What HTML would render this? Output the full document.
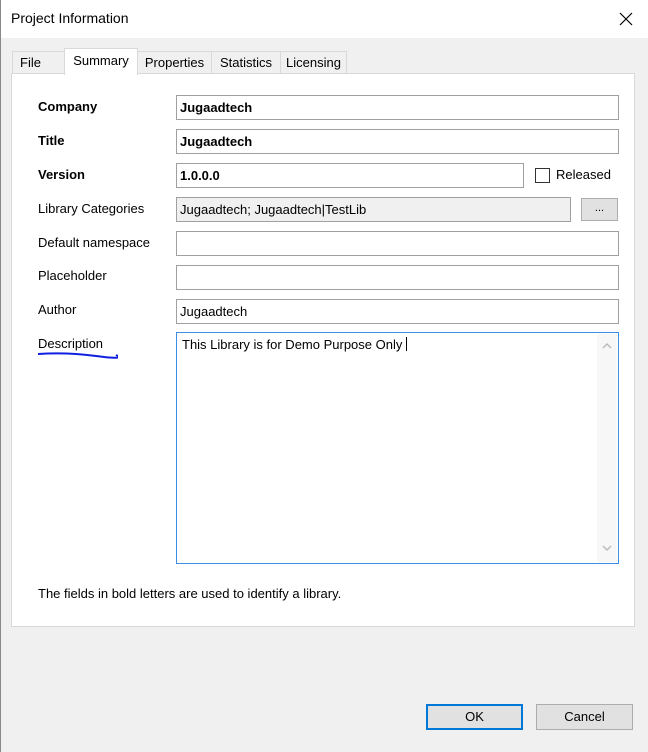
<!DOCTYPE html>
<html><head><style>
body{margin:0;width:648px;height:752px;background:#f0f0f0;font-family:"Liberation Sans",sans-serif;font-size:13px;color:#000;position:relative;overflow:hidden}
.a{position:absolute}
.title{left:0;top:0;width:648px;height:38px;background:#fff}
.inp{position:absolute;left:176px;width:443px;height:25px;background:#fff;border:1px solid #a0a0a0;line-height:23px;padding-left:3px;box-sizing:border-box}
.lbl{position:absolute;left:38px}
.b{font-weight:bold}
.tab{position:absolute;top:51px;height:22px;border:1px solid #d9d9d9;border-bottom:none;background:#f0f0f0;text-align:center;line-height:22px;box-sizing:border-box}
.btn{position:absolute;top:704px;height:26px;background:#e1e1e1;border:1px solid #adadad;text-align:center;line-height:24px;box-sizing:border-box}
</style></head><body>
<div class="a title"></div>
<div class="a" style="left:0;top:0;width:1px;height:752px;background:#888"></div>
<div class="a" style="left:11px;top:10px;font-size:14px">Project Information</div>
<svg class="a" style="left:619px;top:12px" width="14" height="14"><path d="M1 1L13 13M13 1L1 13" stroke="#000" stroke-width="1.2"/></svg>
<div class="a" style="left:11px;top:73px;width:624px;height:554px;background:#fff;border:1px solid #d9d9d9;box-sizing:border-box"></div>
<div class="tab" style="left:12px;width:53px;text-align:left;padding-left:7px">File</div>
<div class="tab" style="left:137px;width:75px">Properties</div>
<div class="tab" style="left:211px;width:70px">Statistics</div>
<div class="tab" style="left:280px;width:67px">Licensing</div>
<div class="tab" style="left:64px;top:48px;height:27px;width:74px;background:#fff;line-height:24px">Summary</div>

<div class="lbl b" style="top:99px">Company</div>
<div class="inp b" style="top:95px">Jugaadtech</div>
<div class="lbl b" style="top:133px">Title</div>
<div class="inp b" style="top:129px">Jugaadtech</div>
<div class="lbl b" style="top:167px">Version</div>
<div class="inp b" style="top:163px;width:348px">1.0.0.0</div>
<div class="a" style="left:535px;top:168px;width:13px;height:13px;border:1px solid #333;background:#fff"></div>
<div class="a" style="left:556px;top:167px">Released</div>
<div class="lbl" style="top:201px">Library Categories</div>
<div class="inp" style="top:197px;width:395px;background:#f0f0f0">Jugaadtech; Jugaadtech|TestLib</div>
<div class="a" style="left:581px;top:198px;width:37px;height:23px;background:#e1e1e1;border:1px solid #adadad;box-sizing:border-box;text-align:center;line-height:18px;font-size:11px">...</div>
<div class="lbl" style="top:235px">Default namespace</div>
<div class="inp" style="top:231px"></div>
<div class="lbl" style="top:268px">Placeholder</div>
<div class="inp" style="top:265px"></div>
<div class="lbl" style="top:302px">Author</div>
<div class="inp" style="top:299px">Jugaadtech</div>
<div class="lbl" style="top:336px">Description</div>
<svg class="a" style="left:36px;top:350px" width="82" height="10"><path d="M2 4Q30 2 60 6T80 5" stroke="#1020e0" stroke-width="2" fill="none"/></svg>
<div class="a" style="left:176px;top:332px;width:443px;height:232px;background:#fff;border:1px solid #3c8ee0;box-sizing:border-box"></div>
<div class="a" style="left:182px;top:337px">This Library is for Demo Purpose Only <span style="display:inline-block;width:1px;height:14px;background:#000;vertical-align:-2px"></span></div>
<div class="a" style="left:597px;top:334px;width:20px;height:228px;background:#f7f7f7"></div>
<svg class="a" style="left:600px;top:340px" width="14" height="214"><path d="M3 8L7 4L11 8" stroke="#bbb" fill="none" stroke-width="1.5"/><path d="M3 206L7 210L11 206" stroke="#bbb" fill="none" stroke-width="1.5"/></svg>
<div class="a" style="left:38px;top:586px">The fields in bold letters are used to identify a library.</div>

<div class="btn" style="left:426px;width:97px;border:2px solid #0078d7;line-height:22px">OK</div>
<div class="btn" style="left:536px;width:97px">Cancel</div>
</body></html>
